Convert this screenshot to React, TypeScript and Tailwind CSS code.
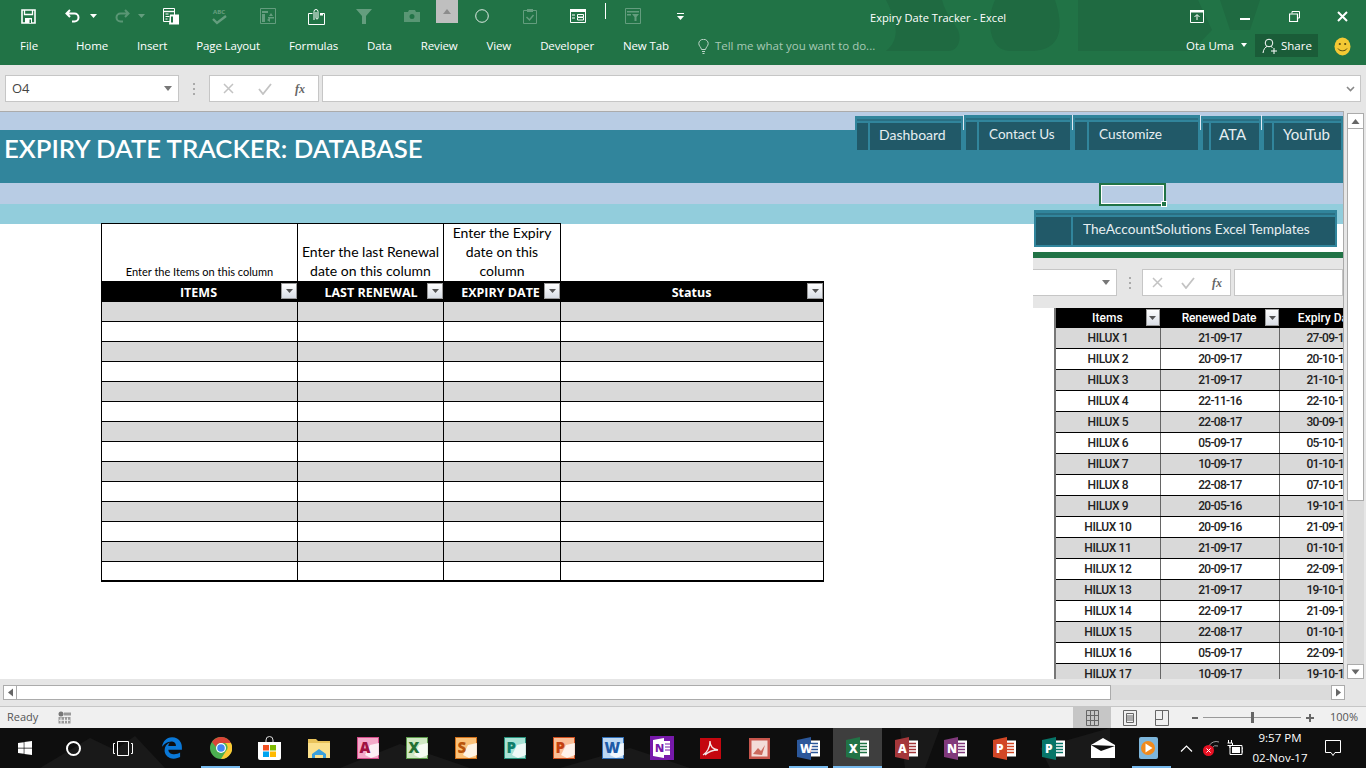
import { FaEdgeLegacy, FaWindows } from "react-icons/fa6";
import type { ReactNode } from "react";

const hilux = [
  ["HILUX 1", "21-09-17", "27-09-17"],
  ["HILUX 2", "20-09-17", "20-10-17"],
  ["HILUX 3", "21-09-17", "21-10-17"],
  ["HILUX 4", "22-11-16", "22-10-17"],
  ["HILUX 5", "22-08-17", "30-09-17"],
  ["HILUX 6", "05-09-17", "05-10-17"],
  ["HILUX 7", "10-09-17", "01-10-17"],
  ["HILUX 8", "22-08-17", "07-10-17"],
  ["HILUX 9", "20-05-16", "19-10-17"],
  ["HILUX 10", "20-09-16", "21-09-17"],
  ["HILUX 11", "21-09-17", "01-10-17"],
  ["HILUX 12", "20-09-17", "22-09-17"],
  ["HILUX 13", "21-09-17", "19-10-17"],
  ["HILUX 14", "22-09-17", "21-09-17"],
  ["HILUX 15", "22-08-17", "01-10-17"],
  ["HILUX 16", "05-09-17", "22-09-17"],
  ["HILUX 17", "10-09-17", "19-10-17"],
];

const tabs = ["Home", "Insert", "Page Layout", "Formulas", "Data", "Review", "View", "Developer", "New Tab"];

function Slot({ w, children }: { w: string; children: ReactNode }) {
  return <div className={w + " flex items-center justify-center shrink-0"}>{children}</div>;
}

function Caret({ dim }: { dim?: boolean }) {
  return (
    <svg width="7" height="4" viewBox="0 0 7 4" className={dim ? "opacity-30" : ""}>
      <path d="M0 0h7L3.5 4z" fill="#fff" />
    </svg>
  );
}

function QuickAccess() {
  return (
    <div className="flex items-center h-[32px]">
      <Slot w="w-[56px]">
        <svg width="15" height="15" viewBox="0 0 15 15" fill="none">
          <path d="M1 1h13v13H1z" stroke="#fff" strokeWidth="1.6" />
          <path d="M3.5 1v4.5h8V1" stroke="#fff" strokeWidth="1.3" />
          <path d="M4 9h7v5H4z" fill="#fff" />
          <path d="M8.5 10.5h1.5V14H8.5z" fill="#217346" />
        </svg>
      </Slot>
      <Slot w="w-[30px]">
        <svg width="16" height="14" viewBox="0 0 16 14" fill="none" className="ml-[4px]">
          <path d="M5 1L1.5 4.5 5 8M2 4.5h7.5a4 4 0 0 1 0 8H7" stroke="#fff" strokeWidth="2" />
        </svg>
      </Slot>
      <Slot w="w-[14px]"><Caret /></Slot>
      <Slot w="w-[28px] ml-[8px]">
        <svg width="16" height="14" viewBox="0 0 16 14" fill="none" className="opacity-25">
          <path d="M11 1l3.5 3.5L11 8M14 4.5H6.5a4 4 0 0 0 0 8H9" stroke="#fff" strokeWidth="2" />
        </svg>
      </Slot>
      <Slot w="w-[11px]"><Caret dim /></Slot>
      <Slot w="w-[48px]">
        <svg width="17" height="17" viewBox="0 0 17 17" fill="none">
          <path d="M.5.5h11v13H.5z" stroke="#fff" fill="#217346" />
          <path d="M.5 3.5h11" stroke="#fff" strokeWidth="1.4" />
          <path d="M2.5 6h3M2.5 8.5h4M2.5 11h2" stroke="#fff" />
          <path d="M7 6.5h9v10H6z" fill="#fff" />
          <path d="M8 8.5h2v6H8z" fill="#217346" />
        </svg>
      </Slot>
      <Slot w="w-[49px]">
        <svg width="16" height="17" viewBox="0 0 16 17" fill="none" className="opacity-30">
          <text x="1" y="6" fontSize="6" fontWeight="700" fill="#fff" fontFamily="Open Sans, sans-serif">ABC</text>
          <path d="M1 11l4 4 9-7" stroke="#fff" strokeWidth="2.4" />
        </svg>
      </Slot>
      <Slot w="w-[48px]">
        <svg width="16" height="16" viewBox="0 0 16 16" fill="none" className="opacity-30">
          <path d="M.5.5h15v15H.5z" stroke="#fff" />
          <path d="M2 3h6v2H2zM2 6h3v8H2zM8 9h6v1.5H8zM11 5l2 3h-4zM7 12l3-2v4z" fill="#fff" />
        </svg>
      </Slot>
      <Slot w="w-[48px]">
        <svg width="17" height="17" viewBox="0 0 17 17" fill="none">
          <path d="M4.5 5.5H.5v11h16v-11h-4" stroke="#fff" />
          <path d="M6 12V3.5a2 2 0 0 1 4 0V10a1 1 0 0 1-2 0V4" stroke="#fff" />
          <path d="M12 5h3v2.5h-3z" fill="#fff" />
        </svg>
      </Slot>
      <Slot w="w-[48px]">
        <svg width="16" height="15" viewBox="0 0 16 15" className="opacity-30">
          <path d="M0 0h16L10 7v8H6V7z" fill="#fff" />
        </svg>
      </Slot>
      <Slot w="w-[48px]">
        <svg width="16" height="12" viewBox="0 0 16 12" className="opacity-25">
          <path fillRule="evenodd" d="M0 2h4l1-2h6l1 2h4v10H0zM8 4a2.5 2.5 0 1 0 0 5 2.5 2.5 0 0 0 0-5z" fill="#fff" />
        </svg>
      </Slot>
      <div className="w-[22px] h-[23px] -mt-[9px] bg-[#bfbfbf] flex items-center justify-center shrink-0">
        <svg width="8" height="5" viewBox="0 0 8 5"><path d="M4 0l4 5H0z" fill="#8c8c8c" /></svg>
      </div>
      <Slot w="w-[48px]">
        <svg width="14" height="14" viewBox="0 0 14 14" fill="none">
          <circle cx="7" cy="7" r="6.3" stroke="#fff" strokeOpacity=".85" strokeWidth="1" />
        </svg>
      </Slot>
      <Slot w="w-[48px]">
        <svg width="14" height="16" viewBox="0 0 14 16" fill="none" className="opacity-30">
          <path d="M.5 2.5h13v13H.5z" stroke="#fff" />
          <path d="M4 1h6v3H4z" fill="#fff" />
          <path d="M3.5 9l3 3 4-5" stroke="#fff" strokeWidth="1.5" />
        </svg>
      </Slot>
      <Slot w="w-[48px]">
        <svg width="16" height="14" viewBox="0 0 16 14" fill="none">
          <path d="M.5.5h15v13H.5z" stroke="#fff" fill="#217346" />
          <path d="M0 0h16v3H0z" fill="#fff" />
          <path d="M2 6h3M2 9h3" stroke="#fff" />
          <path d="M7.5 5.5h6V8h-6zM7.5 8.5h6V11h-6z" stroke="#fff" />
        </svg>
      </Slot>
      <div className="w-[1px] h-[16px] bg-white -mt-[10px] ml-[3px]" />
      <Slot w="w-[48px] ml-[3px]">
        <svg width="16" height="16" viewBox="0 0 16 16" fill="none" className="opacity-30">
          <path d="M.5.5h15v15H.5z" stroke="#fff" />
          <path d="M2 3h12v1.5H2zM2 6h4v1.5H2zM7 6h7L11.5 9v4h-2V9z" fill="#fff" />
        </svg>
      </Slot>
      <Slot w="w-[46px]">
        <svg width="7" height="7" viewBox="0 0 7 7">
          <path d="M0 0h7v1H0zM0 3h7L3.5 7z" fill="#fff" />
        </svg>
      </Slot>
    </div>
  );
}

function TitleBar() {
  return (
    <div className="relative h-[65px] bg-[#217346] text-white shrink-0 overflow-hidden">
      <svg width="400" height="65" viewBox="0 0 400 65" className="absolute left-[880px] top-0" fill="#1f6a41">
        <path d="M6 0h56c4 14 10 20 16 30 4 10 0 21-10 21H6c12-10 14-24 0-51zM115 0h60c10 30 5 51-25 51h-20c-20 0-25-30-15-51zM198 0h120l14 30-20 21H198zM340 0h40l-10 30h-20z" />
      </svg>
      <QuickAccess />
      <div className="absolute left-[870px] top-[10px] text-[11.1px] leading-[16px]">Expiry Date Tracker - Excel</div>
      <div className="absolute left-[1190px] top-[10px] flex items-center">
        <svg width="14" height="13" viewBox="0 0 14 13" fill="none">
          <path d="M.5.5h13v12H.5z" stroke="#fff" />
          <path d="M0 0h14v2.5H0z" fill="#fff" />
          <path d="M7 10V5M4.5 7L7 4.5 9.5 7" stroke="#fff" />
        </svg>
        <div className="w-[10px] h-[2px] bg-white ml-[36px] mt-[5px]" />
        <svg width="11" height="11" viewBox="0 0 11 11" fill="none" className="ml-[39px]">
          <path d="M3 2.5V.5h7.5V7H8.5" stroke="#fff" />
          <path d="M.5 3h8v7.5h-8z" stroke="#fff" strokeWidth="1.2" />
        </svg>
        <svg width="11" height="11" viewBox="0 0 11 11" className="ml-[37px]">
          <path d="M1 1l9 9M10 1l-9 9" stroke="#fff" strokeWidth="2" />
        </svg>
      </div>

      <div className="absolute left-0 top-[38px] flex items-center text-[11.5px] leading-[16px] whitespace-nowrap">
        <div className="w-[76px] pl-[20px]">File</div>
        <div className="flex gap-[29px] tracking-[-0.13px]">
          {tabs.map((t) => (
            <div key={t}>{t}</div>
          ))}
        </div>
        <svg width="11" height="15" viewBox="0 0 11 15" fill="none" className="ml-[29px] opacity-70">
          <path d="M3.5 10.5C3 8 .8 7 .8 4.5a4.7 4.2 0 0 1 9.4 0C10.2 7 8 8 7.5 10.5zM4 12.5h3M4.5 14.5h2" stroke="#fff" />
        </svg>
        <div className="ml-[6px] text-[#a7c9b5]">Tell me what you want to do...</div>
      </div>
      <div className="absolute left-[1186px] top-[38px] flex items-center text-[11.5px] leading-[16px]">
        Ota Uma
        <svg width="6" height="4" viewBox="0 0 6 4" className="ml-[7px] mb-[3px]"><path d="M0 0h6L3 4z" fill="#fff" /></svg>
      </div>
      <div className="absolute left-[1255px] top-[34px] w-[63px] h-[23px] bg-[#1a5c38] flex items-center pl-[7px] gap-[3px] text-[11.5px]">
        <svg width="16" height="16" viewBox="0 0 16 16" fill="none">
          <circle cx="7" cy="5" r="3.8" stroke="#fff" />
          <path d="M1 15c.5-4 2.5-6 4-6.5M9 8.5c.5.3 1 .6 1.5 1M9 13h6M12 10v6" stroke="#fff" />
        </svg>
        Share
      </div>
      <svg width="17" height="19" viewBox="0 0 17 19" className="absolute left-[1334px] top-[37px]">
        <ellipse cx="8.5" cy="9.5" rx="8" ry="9" fill="#f4c934" />
        <circle cx="5.8" cy="7" r="1.1" fill="#5a4a10" />
        <circle cx="11.2" cy="7" r="1.1" fill="#5a4a10" />
        <path d="M4 11.5c1.5 3 7.5 3 9 0" stroke="#5a4a10" strokeWidth="1" fill="none" />
      </svg>
    </div>
  );
}

function NameBox({ w, label }: { w: string; label?: string }) {
  return (
    <div className={w + " h-[27px] bg-white border border-[#c6c6c6] flex items-center justify-between pl-[6px] pr-[6px] shrink-0"}>
      <span className="text-[13px] text-[#444]">{label}</span>
      <svg width="8" height="5" viewBox="0 0 8 5"><path d="M0 0h8L4 5z" fill="#777" /></svg>
    </div>
  );
}

function FormulaControls({ w, dots, pad, gapA, gapB }: { w: string; dots: string; pad: string; gapA: string; gapB: string }) {
  return (
    <>
      <div className={dots + " w-[4px] h-[27px] flex flex-col items-center justify-center gap-[3px] shrink-0"}>
        <div className="w-[2px] h-[2px] bg-[#aaa]" />
        <div className="w-[2px] h-[2px] bg-[#aaa]" />
        <div className="w-[2px] h-[2px] bg-[#aaa]" />
      </div>
      <div className={w + " " + pad + " h-[27px] bg-white border border-[#c6c6c6] flex items-center shrink-0"}>
        <svg width="11" height="11" viewBox="0 0 11 11"><path d="M1 1l9 9M10 1l-9 9" stroke="#c3c3c3" strokeWidth="1.5" /></svg>
        <svg width="14" height="12" viewBox="0 0 14 12" className={gapA} fill="none"><path d="M1 6l4 5 8-10" stroke="#c3c3c3" strokeWidth="1.8" /></svg>
        <span className={gapB + " text-[12px] italic font-bold text-[#666] font-['Liberation_Serif',serif]"}>fx</span>
      </div>
    </>
  );
}

function FormulaBar() {
  return (
    <div className="h-[46px] bg-[#e6e6e6] flex items-start pt-[10px] pl-[5px] pr-[5px] shrink-0">
      <NameBox w="w-[174px]" label="O4" />
      <FormulaControls w="w-[110px]" dots="mx-[13px]" pad="pl-[13px]" gapA="ml-[24px]" gapB="ml-[23px]" />
      <div className="flex-1 h-[27px] ml-[3px] bg-white border border-[#c6c6c6] flex items-center justify-end pr-[5px]">
        <svg width="9" height="6" viewBox="0 0 9 6" fill="none"><path d="M1 1l3.5 3.5L8 1" stroke="#888" strokeWidth="1.6" /></svg>
      </div>
    </div>
  );
}

function ShapeButton({ label, left, w, pad, size = "text-[14px]" }: { label: string; left: string; w: string; pad: string; size?: string }) {
  return (
    <div className={w + " bg-[#31859c] p-[2px] flex flex-col shrink-0"}>
      <div className="h-[2px] bg-[#2a6f83] mt-[1px] mb-[2px]" />
      <div className="flex-1 flex gap-[2px]">
        <div className={left + " bg-[#215968] shrink-0"} />
        <div className={pad + " flex-1 bg-[#215968] text-[#e6eef1] flex items-center pb-[4px] whitespace-nowrap font-['Lato',sans-serif]"}>
          <span className={size}>{label}</span>
        </div>
      </div>
    </div>
  );
}

function FilterBtn({ small }: { small?: boolean }) {
  return (
    <div className={(small ? "w-[14px] h-[17px] right-[1px] top-[1px]" : "w-[16px] h-[16px] right-0 top-[2px]") + " absolute bg-gradient-to-b from-white to-[#d9dee6] border border-[#999] flex items-center justify-center"}>
      <svg width="7" height="4" viewBox="0 0 7 4"><path d="M0 0h7L3.5 4z" fill="#555" /></svg>
    </div>
  );
}

function TrackerTable() {
  const cols = ["w-[196px]", "w-[146px]", "w-[117px]", "w-[263px]"];
  const heads = ["ITEMS", "LAST RENEWAL", "EXPIRY DATE", "Status"];
  const rows = Array.from({ length: 14 }, (_, i) => i);
  return (
    <div className="ml-[101px] -mt-[1px] w-[723px] font-['Lato',sans-serif]">
      <div className="flex h-[58px] w-[460px] border-t border-l border-r border-black text-black text-center">
        <div className="w-[196px] border-r border-black flex items-end justify-center pb-[1px] text-[11px]">Enter the Items on this column</div>
        <div className="w-[146px] border-r border-black flex items-end justify-center pb-[1px] text-[14px] leading-[19px]">Enter the last Renewal date on this column</div>
        <div className="flex-1 flex items-end justify-center pb-[1px] text-[14px] leading-[19px] px-[6px]">Enter the Expiry date on this column</div>
      </div>
      <div className="flex h-[21px] bg-black text-white text-[12.5px] font-bold font-['Open_Sans',sans-serif]">
        {heads.map((h, i) => (
          <div key={h} className={cols[i] + " relative flex items-center justify-center pt-[3px] shrink-0 " + (i === 0 ? "pl-[1px]" : "")}>
            <span className={i === 0 ? "pr-[2px]" : i === 1 ? "pl-[2px]" : i === 2 ? "pr-[2px]" : ""}>{h}</span>
            <FilterBtn />
          </div>
        ))}
      </div>
      {rows.map((r) => (
        <div key={r} className={"flex h-[20px] border-b border-l border-r border-black " + (r % 2 === 0 ? "bg-[#d9d9d9] " : "bg-white ") + (r === 13 ? "border-b-2" : "")}>
          <div className="w-[196px] border-r border-black shrink-0" />
          <div className="w-[146px] border-r border-black shrink-0" />
          <div className="w-[117px] border-r border-black shrink-0" />
          <div className="flex-1" />
        </div>
      ))}
    </div>
  );
}

function EmbeddedShot() {
  return (
    <div className="absolute left-[1033px] top-[140px] w-[310px] h-[427px] overflow-hidden bg-white">
      <div className="h-[6px] bg-[#217346]" />
      <div className="h-[50px] bg-[#e6e6e6] flex items-start pt-[11px]">
        <NameBox w="w-[85px] -ml-px" />
        <FormulaControls w="w-[89px]" dots="ml-[11px] mr-[10px]" pad="pl-[9px]" gapA="ml-[18px]" gapB="ml-[17px]" />
        <div className="flex-1 h-[27px] ml-[3px] bg-white border border-[#c6c6c6]" />
      </div>
      <div className="ml-[21px] w-[322px] border-l-2 border-[#777] font-['Roboto',sans-serif] text-[12px] font-medium text-[#222]">
        <div className="flex h-[20px] bg-black text-white">
          <div className="w-[105px] relative flex items-center justify-center pr-[2px]">Items<FilterBtn small /></div>
          <div className="w-[120px] relative flex items-center justify-center pr-[3px] tracking-[-0.2px]">Renewed Date<FilterBtn small /></div>
          <div className="w-[96px] flex items-center justify-center">Expiry Date</div>
        </div>
        {hilux.map((row, i) => (
          <div key={row[0]} className={"flex h-[21px] border-b border-black " + (i % 2 === 0 ? "bg-[#d9d9d9]" : "bg-white")}>
            <div className="w-[105px] border-r border-[#666] flex items-center justify-center tracking-[-0.4px]">{row[0]}</div>
            <div className="w-[120px] border-r border-[#666] flex items-center justify-center tracking-[-0.7px]">{row[1]}</div>
            <div className="w-[96px] flex items-center justify-center tracking-[-0.7px]">{row[2]}</div>
          </div>
        ))}
      </div>
    </div>
  );
}

function Sheet() {
  const sep = <div className="w-[1px] h-[15px] bg-[#dfe9f3]" />;
  return (
    <div className="relative w-[1344px] h-[568px] border-t border-r border-[#ababab] bg-white overflow-hidden shrink-0">
      <div className="h-[18px] bg-[#b8cce4]" />
      <div className="h-[53px] bg-[#31859c] pl-[4px] text-white text-[25.7px] leading-[36px] font-semibold font-['Lato',sans-serif]">EXPIRY DATE TRACKER: DATABASE</div>
      <div className="h-[21px] bg-[#b8cce4]" />
      <div className="h-[20px] bg-[#92cddc]" />
      <TrackerTable />

      <div className="absolute left-[855px] top-[3px] h-[37px] flex">
        <ShapeButton label="Dashboard" left="w-[11px]" w="w-[108px] mt-[1px]" pad="pl-[9px]" />
        {sep}
        <ShapeButton label="Contact Us" left="w-[11px]" w="w-[108px]" pad="pl-[10px]" size="text-[13.5px]" />
        {sep}
        <ShapeButton label="Customize" left="w-[12px]" w="w-[127px]" pad="pl-[10px]" size="text-[13.7px]" />
        {sep}
        <ShapeButton label="ATA" left="w-[6px]" w="w-[60px] mt-[1px]" pad="pl-[8px]" size="text-[15px]" />
        {sep}
        <ShapeButton label="YouTub" left="w-[8px]" w="w-[81px] mt-[1px]" pad="pl-[9px]" size="text-[15px]" />
      </div>
      <div className="absolute left-[1034px] top-[98px] w-[303px] h-[37px] flex">
        <ShapeButton label="TheAccountSolutions Excel Templates" left="w-[35px]" w="w-[303px]" pad="pl-[10px]" size="text-[13.7px]" />
      </div>
      <EmbeddedShot />

      {/* selected cell */}
      <div className="absolute left-[1099px] top-[71px] w-[67px] h-[23px] border-2 border-[#217346]">
        <div className="w-full h-full border border-white" />
        <div className="absolute -right-[3px] -bottom-[3px] w-[6px] h-[6px] bg-[#217346] border border-white" />
      </div>
    </div>
  );
}

function ScrollArrow({ dir }: { dir: "up" | "down" | "left" | "right" }) {
  const d = { up: "M4.5 2l4 5H.5z", down: "M.5 2.5h8l-4 5z", left: "M7 .5v8L2 4.5z", right: "M2 .5v8l5-4z" }[dir];
  return (
    <svg width="9" height="9" viewBox="0 0 9 9"><path d={d} fill="#666" /></svg>
  );
}

function VerticalScroll() {
  return (
    <div className="ml-[3px] mt-[2px] w-[17px] h-[566px] bg-[#dbdbdb] flex flex-col shrink-0">
      <div className="h-[16px] bg-white border border-[#ababab] flex items-center justify-center"><ScrollArrow dir="up" /></div>
      <div className="h-[372px] bg-white border-x border-b border-[#ababab]" />
      <div className="flex-1" />
      <div className="h-[15px] bg-white border border-[#ababab] flex items-center justify-center"><ScrollArrow dir="down" /></div>
    </div>
  );
}

function BottomBars() {
  return (
    <>
      <div className="h-[6px] shrink-0" />
      <div className="h-[15px] ml-[3px] mr-[21px] flex shrink-0 bg-[#dbdbdb]">
        <div className="w-[14px] bg-white border border-[#ababab] flex items-center justify-center"><ScrollArrow dir="left" /></div>
        <div className="w-[1094px] bg-white border-y border-r border-[#ababab]" />
        <div className="flex-1" />
        <div className="w-[14px] bg-white border border-[#ababab] flex items-center justify-center"><ScrollArrow dir="right" /></div>
      </div>
      <div className="h-[7px] border-b border-[#c6c6c6] shrink-0" />
      <div className="h-[21px] bg-[#f0f0f0] flex items-center text-[11px] text-[#555] shrink-0 relative">
        <span className="ml-[7px]">Ready</span>
        <svg width="13" height="13" viewBox="0 0 13 13" className="ml-[20px]" fill="none">
          <circle cx="3" cy="3" r="2.5" fill="#777" />
          <path d="M6 1.5h7v3H6zM.5 6h12v6.5H.5z" fill="#999" />
          <path d="M3 6.5v6M6.5 6.5v6M9.5 6.5v6M1 9.3h11" stroke="#f0f0f0" />
        </svg>
        <div className="ml-auto flex items-center h-full">
          <div className="w-[38px] h-full bg-[#c6c6c6] flex items-center justify-center">
            <svg width="13" height="16" viewBox="0 0 13 16" fill="none"><path d="M.5.5h12v15H.5zM.5 5.5h12M.5 10.5h12M4.5.5v15M8.5.5v15" stroke="#666" /></svg>
          </div>
          <div className="w-[38px] flex items-center justify-center">
            <svg width="14" height="16" viewBox="0 0 14 16" fill="none"><path d="M.5.5h13v15H.5z" stroke="#666" /><path d="M3.5 3.5h7v9h-7zM4 6h6M4 8h6M4 10h6" stroke="#666" /></svg>
          </div>
          <div className="w-[26px] flex items-center justify-center">
            <svg width="14" height="16" viewBox="0 0 14 16" fill="none"><path d="M.5.5h13v15H.5zM.5 9.5h7V.5" stroke="#666" /></svg>
          </div>
          <div className="w-[6px] h-[2px] bg-[#666] ml-[17px]" />
          <div className="w-[98px] h-[1px] bg-[#999] mx-[5px] relative">
            <div className="absolute left-[48px] -top-[5px] w-[3px] h-[11px] bg-[#666]" />
          </div>
          <div className="relative w-[8px] h-[8px]">
            <div className="absolute left-0 top-[3px] w-[8px] h-[2px] bg-[#666]" />
            <div className="absolute left-[3px] top-0 w-[2px] h-[8px] bg-[#666]" />
          </div>
          <span className="ml-[16px] mr-[8px]">100%</span>
        </div>
      </div>
    </>
  );
}

function OldOffice({ c1, c2, fg, letter }: { c1: string; c2: string; fg: string; letter: string }) {
  return (
    <svg width="22" height="22" viewBox="0 0 22 22">
      <rect x=".5" y=".5" width="21" height="21" fill={c2} stroke={c1} />
      <path d="M13 8l9-2v12l-8 3-6-3z" fill="#fff" fillOpacity=".8" />
      <text x="2.5" y="16" fontSize="15" fontWeight="800" fill={fg} fontFamily="Open Sans, sans-serif">{letter}</text>
    </svg>
  );
}

function NewOffice({ c, letter }: { c: string; letter: string }) {
  return (
    <svg width="23" height="23" viewBox="0 0 23 23">
      <rect x="9" y="3.5" width="14" height="16" fill="#fff" />
      <path d="M12 6.5h9M12 9.5h9M12 12.5h9M12 15.5h9" stroke={c} strokeWidth="1.4" />
      <path d="M0 3l14-3v23L0 20z" fill={c} />
      <text x="3" y="16" fontSize="12" fontWeight="800" fill="#fff" fontFamily="Open Sans, sans-serif">{letter}</text>
    </svg>
  );
}

function Chrome() {
  return (
    <svg width="22" height="22" viewBox="0 0 22 22">
      <circle cx="11" cy="11" r="11" fill="#4caf50" />
      <path d="M2 5a11 11 0 0 1 19 1H11a5 5 0 0 0-5 4z" fill="#db4437" />
      <path d="M21 6a11 11 0 0 1-10 16l5-8a5 5 0 0 0-1-8z" fill="#fcc934" />
      <circle cx="11" cy="11" r="5" fill="#fff" />
      <circle cx="11" cy="11" r="3.8" fill="#4285f4" />
    </svg>
  );
}

function Store() {
  return (
    <svg width="23" height="24" viewBox="0 0 23 24" fill="none">
      <path d="M8 6V4a3.5 3.5 0 0 1 7 0v2" stroke="#ddd" />
      <path d="M0 6h23v16a2 2 0 0 1-2 2H2a2 2 0 0 1-2-2z" fill="#fff" />
      <path d="M5 9h6v5.5H5z" fill="#f25022" />
      <path d="M12 9h6v5.5h-6z" fill="#7fba00" />
      <path d="M5 15.5h6V21H5z" fill="#00a4ef" />
      <path d="M12 15.5h6V21h-6z" fill="#ffb900" />
    </svg>
  );
}

function Folder() {
  return (
    <svg width="22" height="20" viewBox="0 0 22 20">
      <path d="M0 1h8l2 2h12v17H0z" fill="#e8c25a" />
      <path d="M0 5h22v15H0z" fill="#fbe08c" />
      <path d="M4 16l7-5 7 5v4h-3v-3H7v3H4z" fill="#3aa0dc" />
    </svg>
  );
}

function Taskbar() {
  const apps: ReactNode[] = [
    <FaWindows key="w" className="text-white text-[16px]" />,
    <div key="c" className="w-[15px] h-[15px] rounded-full border-[2.5px] border-white" />,
    <svg key="t" width="20" height="15" viewBox="0 0 20 15" fill="none">
      <path d="M4.5.5h11v14h-11zM2 2.5H.5v10H2M18 2.5h1.5v10H18" stroke="#fff" />
    </svg>,
    <FaEdgeLegacy key="e" className="text-[#0a78d7] text-[22px]" />,
    <Chrome key="ch" />,
    <Store key="s" />,
    <Folder key="f" />,
    <OldOffice key="a10" c1="#d44c8a" c2="#f5a9c9" fg="#a0103f" letter="A" />,
    <OldOffice key="x10" c1="#5c9a4b" c2="#cfe8c3" fg="#257033" letter="X" />,
    <OldOffice key="s10" c1="#d2711a" c2="#fbc27a" fg="#b9540c" letter="S" />,
    <OldOffice key="p10" c1="#27927c" c2="#a9e2d6" fg="#0f7d6a" letter="P" />,
    <OldOffice key="pp10" c1="#cf4f1e" c2="#fbbf97" fg="#c4400f" letter="P" />,
    <OldOffice key="w10" c1="#2f6db5" c2="#bcd8f3" fg="#1d5ba8" letter="W" />,
    <svg key="on" width="24" height="24" viewBox="0 0 24 24">
      <rect width="24" height="24" fill="#7719aa" />
      <rect x="13" y="5" width="7" height="14" fill="#fff" />
      <path d="M15 8h5M15 11h5M15 14h5" stroke="#7719aa" />
      <path d="M3 4l11-2v20L3 20z" fill="#fff" />
      <text x="5" y="16" fontSize="11" fontWeight="800" fill="#7719aa" fontFamily="Open Sans, sans-serif">N</text>
    </svg>,
    <svg key="ad" width="21" height="21" viewBox="0 0 21 21" fill="none">
      <rect width="21" height="21" fill="#c4070f" />
      <path d="M3 17c4-2 7-8 7-14 0 5 2 8 8 9-5 0-10 2-13 5" stroke="#f5e6e6" strokeWidth="1.3" />
    </svg>,
    <svg key="pw" width="21" height="21" viewBox="0 0 21 21" fill="none">
      <rect width="21" height="21" fill="#c8564d" />
      <rect x="2.5" y="2.5" width="16" height="16" fill="#f3dcd8" />
      <path d="M4 16l5-6 3 3 4-6-3 10z" fill="#cc6a5e" />
    </svg>,
    <NewOffice key="w16" c="#2b579a" letter="W" />,
    <NewOffice key="x16" c="#217346" letter="X" />,
    <NewOffice key="a16" c="#a4373a" letter="A" />,
    <NewOffice key="n16" c="#80397b" letter="N" />,
    <NewOffice key="p16" c="#d24726" letter="P" />,
    <NewOffice key="pb16" c="#077568" letter="P" />,
    <svg key="m" width="24" height="20" viewBox="0 0 24 20">
      <path d="M12 0l12 7v13H0V7z" fill="#fff" />
      <path d="M0 7l24 1-14 5z" fill="#111" />
    </svg>,
    <svg key="mp" width="19" height="22" viewBox="0 0 19 22" className="-ml-[6px]">
      <rect width="19" height="22" rx="2" fill="#7db6dc" />
      <circle cx="9" cy="11" r="7" fill="#f08a1d" />
      <path d="M6.5 6.5l7 4.5-7 4.5z" fill="#fff" />
    </svg>,
  ];
  const underlined = [4, 16, 17, 23];
  return (
    <div className="relative h-[40px] bg-[#0e0e0e] flex text-white shrink-0 overflow-hidden">
      <svg width="1366" height="40" viewBox="0 0 1366 40" className="absolute left-0 top-0" fill="#191919">
        <path d="M40 40L90 10l25 12 20-14 30 32zM340 40l60-24 70 24zM560 40l70-20 60 20zM900 0h40l-15 40h-20zM1040 20l70-20v40h-60z" />
      </svg>
      {apps.map((a, i) => (
        <div key={i} className={"relative w-[49px] h-full flex items-center justify-center shrink-0 " + (i === 17 ? "bg-white/20 " : "")}>
          {a}
          {underlined.includes(i) && <div className={"absolute bottom-0 h-[2px] bg-[#76b9ed] " + (i === 17 ? "inset-x-0" : "inset-x-[5px]")} />}
        </div>
      ))}
      <div className="absolute left-[1180px] top-0 h-full flex items-center">
        <svg width="13" height="7" viewBox="0 0 13 7" fill="none"><path d="M1 6.5L6.5 1 12 6.5" stroke="#fff" strokeWidth="1.2" /></svg>
        <svg width="17" height="16" viewBox="0 0 17 16" fill="none" className="ml-[10px]">
          <path d="M6 6a8 8 0 0 1 10-4M9 8a5 5 0 0 1 6-2" stroke="#999" />
          <circle cx="5.5" cy="10.5" r="5.5" fill="#e81123" />
          <path d="M3.5 8.5l4 4M7.5 8.5l-4 4" stroke="#fff" />
        </svg>
        <svg width="16" height="16" viewBox="0 0 16 16" fill="none" className="ml-[7px]">
          <path d="M3 5.5h12v9H3zM15 8h1v4h-1" stroke="#fff" />
          <path d="M5 7h8v6H5z" fill="#fff" />
          <path d="M1.5 0v3M4.5 0v3M.5 3h5v2.5H.5M3 5.5V8" stroke="#fff" />
        </svg>
        <div className="ml-[2px] w-[70px] text-center text-[11.5px] leading-[20px]">
          <div>9:57 PM</div>
          <div>02-Nov-17</div>
        </div>
        <svg width="16" height="17" viewBox="0 0 16 17" fill="none" className="ml-[10px]">
          <path d="M.5.5h15v12H10l-2 3-2-3H.5z" stroke="#fff" />
        </svg>
      </div>
    </div>
  );
}

export default function App() {
  return (
    <div className="w-[1366px] h-[768px] overflow-hidden flex flex-col bg-[#e6e6e6] font-['Open_Sans',sans-serif]">
      <TitleBar />
      <FormulaBar />
      <div className="flex shrink-0">
        <Sheet />
        <VerticalScroll />
      </div>
      <BottomBars />
      <Taskbar />
    </div>
  );
}
